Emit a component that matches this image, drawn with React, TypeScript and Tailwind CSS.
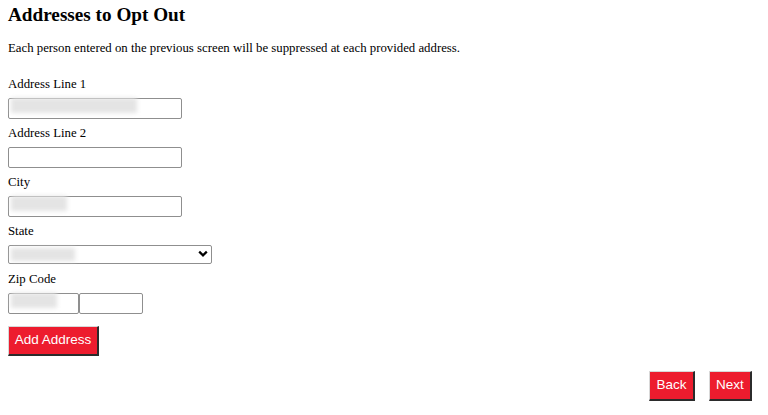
import React from 'react';

const serif = { fontFamily: '"Liberation Serif", "Times New Roman", serif' };

const Redacted: React.FC<{ w: number }> = ({ w }) => (
  <span
    className="pointer-events-none absolute left-[3px] top-[3px] bottom-[3px] bg-[#e4e4e4] blur-[2px]"
    style={{ width: w }}
  />
);

const Field: React.FC<{ label: string; children: React.ReactNode }> = ({ label, children }) => (
  <div className="flex flex-col">
    <label className="text-[12.8px] leading-[16px] text-black">{label}</label>
    <div className="mt-[3px]">{children}</div>
  </div>
);

const TextBox: React.FC<{ width: string; redact?: number }> = ({ width, redact }) => (
  <div className={`relative ${width} h-[21px]`}>
    <input
      type="text"
      className="h-full w-full rounded-[2px] border border-[#8f8f8f] bg-white px-1 text-[13px] outline-none"
    />
    {redact ? <Redacted w={redact} /> : null}
  </div>
);

const RedButton: React.FC<{ children: React.ReactNode; className?: string }> = ({ children, className }) => (
  <button
    className={`block h-[30px] border-t border-l border-r-2 border-b-2 border-t-[#d8d8d8] border-l-[#d8d8d8] border-r-[#2b2b2b] border-b-[#2b2b2b] bg-[#ed1c2e] text-[13.5px] text-white ${className ?? ''}`}
    style={{ fontFamily: '"Liberation Sans", Arial, sans-serif' }}
  >
    {children}
  </button>
);

const App: React.FC = () => {
  return (
    <div className="min-h-screen bg-white px-2 pt-[4px] text-black" style={serif}>
      {/* Header */}
      <h3 className="text-[19.2px] font-bold leading-[22px]">Addresses to Opt Out</h3>
      <p className="mt-[15px] text-[12.8px] leading-[15px]">
        Each person entered on the previous screen will be suppressed at each provided address.
      </p>

      {/* Address form */}
      <div className="mt-[20px] flex flex-col gap-[9px]">
        <Field label="Address Line 1">
          <TextBox width="w-[174px]" redact={126} />
        </Field>
        <Field label="Address Line 2">
          <TextBox width="w-[174px]" />
        </Field>
        <Field label="City">
          <TextBox width="w-[174px]" redact={56} />
        </Field>
        <Field label="State">
          <div className="relative mt-[3px] h-[19px] w-[204px]">
            <select className="h-full w-full appearance-none rounded-[2px] border border-[#8f8f8f] bg-white outline-none" />
            <Redacted w={64} />
            <svg
              className="pointer-events-none absolute right-[4px] top-[5px]"
              width="10"
              height="8"
              viewBox="0 0 10 8"
            >
              <path d="M1.2 1.6 L5 5.4 L8.8 1.6" fill="none" stroke="#000" strokeWidth="2.2" />
            </svg>
          </div>
        </Field>
        <div className="-mt-[2px]">
          <Field label="Zip Code">
            <div className="flex">
              <TextBox width="w-[71px]" redact={46} />
              <TextBox width="w-[64px]" />
            </div>
          </Field>
        </div>
      </div>

      <div className="mt-[15px]">
        <RedButton className="w-[91px]">Add Address</RedButton>
      </div>

      {/* Navigation */}
      <div className="mt-[15px] flex justify-end gap-[14px] pr-[8px]">
        <RedButton className="w-[46px]">Back</RedButton>
        <RedButton className="w-[43px]">Next</RedButton>
      </div>
    </div>
  );
};

export default App;
